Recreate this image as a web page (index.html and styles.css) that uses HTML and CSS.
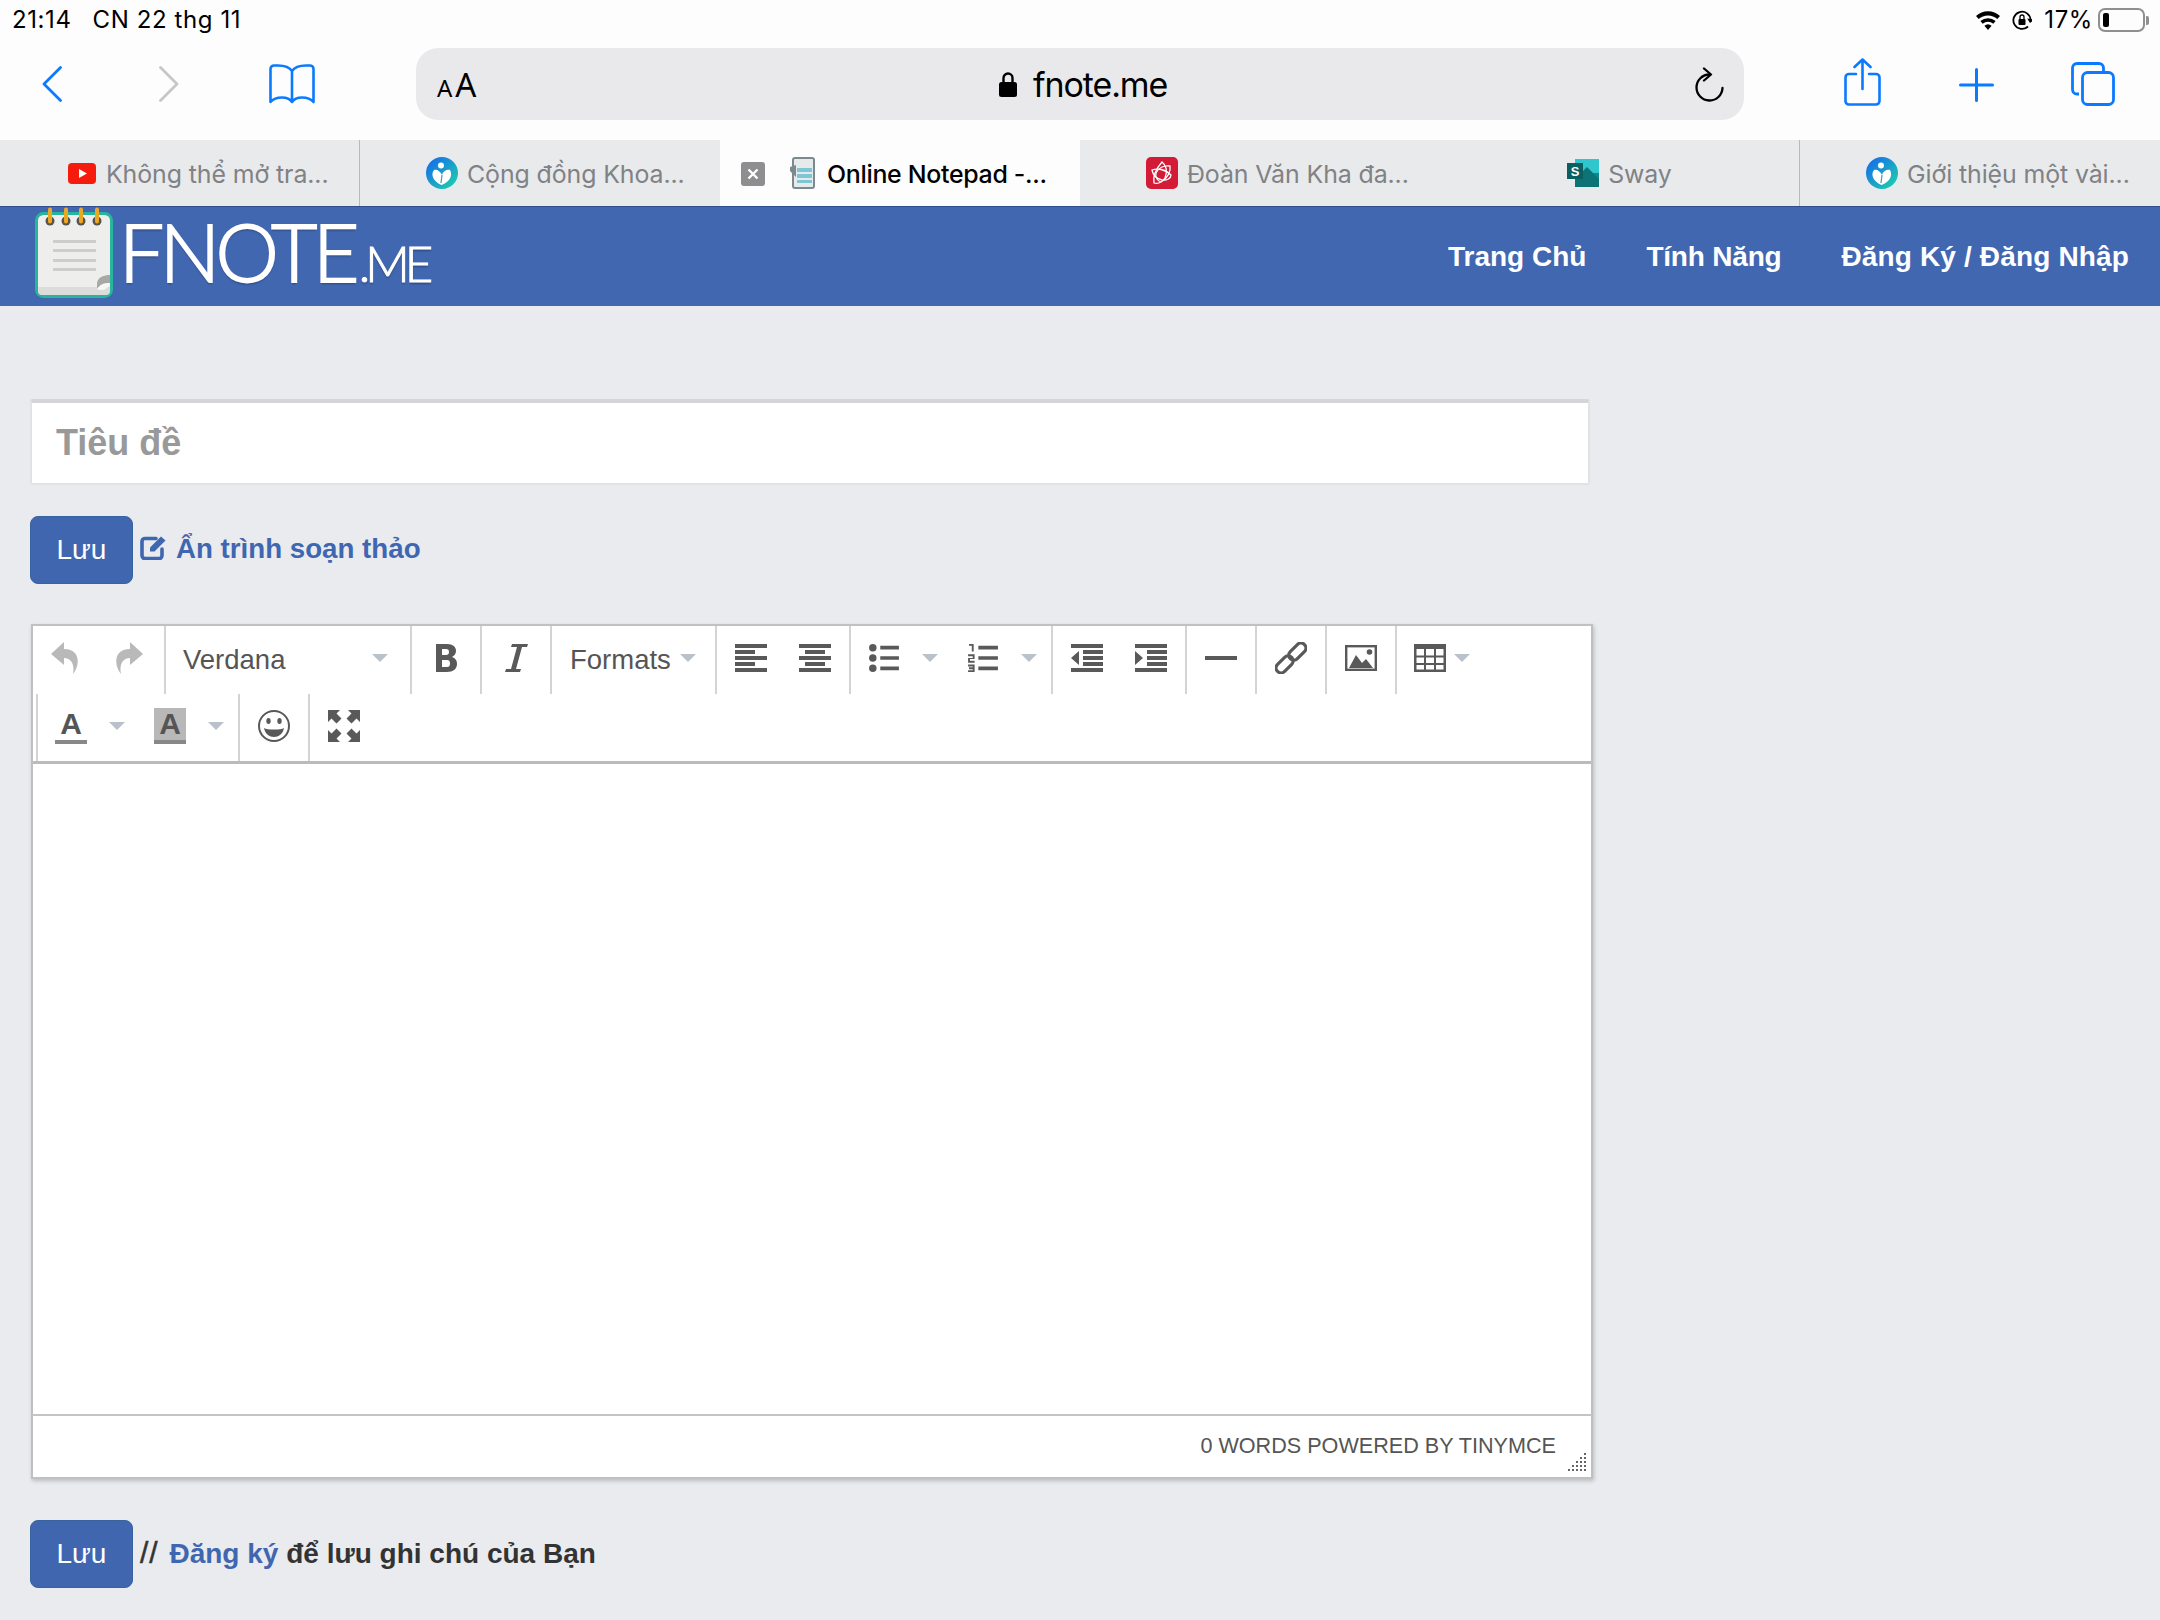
FILE: index.html
```html
<!DOCTYPE html>
<html lang="vi">
<head>
<meta charset="utf-8">
<title>Online Notepad</title>
<link rel="stylesheet" href="styles.css">
</head>
<body>
<header class="browser">
  <div class="status">
    <div class="status-left"><span>21:14</span><span>CN 22 thg 11</span></div>
    <div class="status-right">
      <svg class="i-wifi" viewBox="0 0 26 20"><path d="M13 20l-3.600-4.200a5.400 5.400 0 0 1 7.200 0zM7.700 13.800L5.400 11a11.600 11.600 0 0 1 15.200 0l-2.300 2.800a8 8 0 0 0-10.600 0zM3.700 9L1 6a17.600 17.600 0 0 1 24 0l-2.700 3a14 14 0 0 0-18.600 0z" fill="#000"/></svg>
      <svg class="i-rot" viewBox="0 0 20 20"><path d="M16 16.500A8.600 8.600 0 1 1 18.600 10" fill="none" stroke="#000" stroke-width="1.800"/><path d="M15 9h7l-3.500 4z" fill="#000" transform="rotate(10 18 10)"/><rect x="6.500" y="9" width="7" height="6" rx="1" fill="#000"/><path d="M8 9V7a2 2 0 0 1 4 0v2" fill="none" stroke="#000" stroke-width="1.300"/></svg>
      <span>17%</span>
      <div class="battery"><div class="battery-level"></div></div>
      <div class="battery-nub"></div>
    </div>
  </div>
  <div class="toolbar">
    <div class="tools-left">
      <svg class="i-chev" viewBox="0 0 20 36"><path d="M18.500 1.500L2 18l16.500 16.500" fill="none" stroke="#0a7aff" stroke-width="2.800" stroke-linecap="round" stroke-linejoin="round"/></svg>
      <svg class="i-chev i-fwd" viewBox="0 0 20 36"><path d="M1.500 1.500L18 18 1.500 34.500" fill="none" stroke="#c6c7c9" stroke-width="2.800" stroke-linecap="round" stroke-linejoin="round"/></svg>
      <svg class="i-book" viewBox="0 0 46 40"><path d="M23 7C20 2.500 15 1.500 9 1.500H5A3.500 3.500 0 0 0 1.500 5v33C5 34 9 33.500 13 33.500c4 0 8 1.500 10 4.500 2-3 6-4.500 10-4.500 4 0 8 .5 11.500 4.500V5A3.500 3.500 0 0 0 41 1.500h-4C31 1.500 26 2.500 23 7zm0 0v31" fill="none" stroke="#0a7aff" stroke-width="2.600" stroke-linejoin="round"/></svg>
    </div>
    <div class="urlbar">
      <div class="aa"><span class="aa-small">A</span><span class="aa-big">A</span></div>
      <div class="url">
        <svg class="i-lock" viewBox="0 0 18 25"><path d="M4.500 11V6a4.500 4.500 0 0 1 9 0v5" fill="none" stroke="#000" stroke-width="2.400"/><rect y="10" width="18" height="15" rx="2.500" fill="#000"/></svg>
        <span>fnote.me</span>
      </div>
      <svg class="i-reload" viewBox="0 0 29 35"><path d="M14.500 7.500A13 13 0 1 0 27.500 21" fill="none" stroke="#000" stroke-width="2.300" stroke-linecap="round"/><path d="M9 1.500l7 6-7 6" fill="none" stroke="#000" stroke-width="2.300" stroke-linecap="round" stroke-linejoin="round"/></svg>
    </div>
    <div class="tools-right">
      <svg class="i-share" viewBox="0 0 37 48"><path d="M12 16H5a3.500 3.500 0 0 0-3.500 3.500v23A3.500 3.500 0 0 0 5 46.500h27a3.500 3.500 0 0 0 3.500-3.500V19.500A3.500 3.500 0 0 0 32 16h-7M18.500 31V2M10.500 9l8-7.500 8 7.500" fill="none" stroke="#0a7aff" stroke-width="2.600" stroke-linecap="round" stroke-linejoin="round"/></svg>
      <svg class="i-plus" viewBox="0 0 35 34"><path d="M17.500 1.500v31M1.500 17h32" fill="none" stroke="#0a7aff" stroke-width="3" stroke-linecap="round"/></svg>
      <svg class="i-tabs" viewBox="0 0 44 44"><path d="M8 32H6a4.500 4.500 0 0 1-4.500-4.500V6A4.500 4.500 0 0 1 6 1.500h22A4.500 4.500 0 0 1 32.500 6v4" fill="none" stroke="#0a7aff" stroke-width="2.800"/><rect x="11.500" y="10.500" width="31" height="32" rx="5" fill="none" stroke="#0a7aff" stroke-width="2.800"/></svg>
    </div>
  </div>
  <div class="tabs">
    <div class="tab tab-long tab-yt">
      <svg class="fav fav-yt" viewBox="0 0 28 21"><rect width="28" height="21" rx="4" fill="#f61c0d"/><path d="M11 6l8 4.500-8 4.500z" fill="#fff"/></svg>
      <span>Không thể mở tra...</span>
    </div>
    <div class="tab tab-long">
      <svg class="fav" viewBox="0 0 32 32"><defs><linearGradient id="gr1" x1="0" y1="0" x2="1" y2="1"><stop offset="0" stop-color="#1463f0"/><stop offset="1" stop-color="#1fd7a8"/></linearGradient></defs><circle cx="16" cy="16" r="16" fill="url(#gr1)"/><circle cx="15" cy="8.500" r="3" fill="#fff"/><path d="M15.500 28C8 25 4 18 8 13c3-1 6 1 8 5 1-4 5-6 8-5 3 5 0 12-8.500 15z" fill="#fff"/><path d="M16 18l-1 8" stroke="#3aa0d8" stroke-width="1.200"/></svg>
      <span>Cộng đồng Khoa...</span>
    </div>
    <div class="tab tab-long tab-active">
      <svg class="tab-close" viewBox="0 0 24 24"><rect width="24" height="24" rx="3" fill="#8e8e90"/><path d="M7.500 7.500l9 9m0-9l-9 9" stroke="#fff" stroke-width="2.400"/></svg>
      <svg class="fav fav-note" viewBox="0 0 26 32"><rect x="4" y="1" width="21" height="30" rx="2" fill="#e7eaeb" stroke="#7c8a90" stroke-width="2"/><rect x="8" y="11" width="15" height="4" fill="#7fc6d4"/><rect x="8" y="17" width="15" height="4" fill="#7fc6d4"/><rect x="8" y="23" width="15" height="3" fill="#7fc6d4"/><path d="M1 10l6-2v12l-6-6z" fill="#7c8a90"/></svg>
      <span>Online Notepad -...</span>
    </div>
    <div class="tab tab-long">
      <svg class="fav" viewBox="0 0 32 32"><rect width="32" height="32" rx="5" fill="#d31a36"/><g fill="none" stroke="#fff" stroke-width="1.300"><path d="M16 5c4 3 6 9 3 16-3 5-8 6-11 5-1-5 1-13 8-21z"/><path d="M6 13c5-2 13-1 19 5 0 3-4 6-9 5-5-1-9-5-10-10z"/><path d="M24 9c1 5-2 12-9 16-3-1-6-4-5-9 2-5 8-8 14-7z"/></g></svg>
      <span>Đoàn Văn Kha đa...</span>
    </div>
    <div class="tab">
      <svg class="fav fav-sway" viewBox="0 0 32 28"><path d="M8 0h24v28H8z" fill="#0f8a8c"/><path d="M8 0h24v14H8z" fill="#2fc6cd"/><path d="M8 20l12-12 12 12v8H8z" fill="#0d7377"/><rect y="4" width="16" height="16" fill="#0a5f63"/><text x="8" y="17" class="sway-s">S</text></svg>
      <span>Sway</span>
    </div>
    <div class="tab tab-long">
      <svg class="fav" viewBox="0 0 32 32"><circle cx="16" cy="16" r="16" fill="url(#gr1)"/><circle cx="15" cy="8.500" r="3" fill="#fff"/><path d="M15.500 28C8 25 4 18 8 13c3-1 6 1 8 5 1-4 5-6 8-5 3 5 0 12-8.500 15z" fill="#fff"/><path d="M16 18l-1 8" stroke="#3aa0d8" stroke-width="1.200"/></svg>
      <span>Giới thiệu một vài...</span>
    </div>
  </div>
</header>

<nav class="nav">
  <a class="brand" href="#">
    <svg class="brand-icon" viewBox="0 0 78 91">
      <rect x="1.500" y="6.500" width="75" height="83" rx="7" fill="#eeeeec" stroke="#27b59b" stroke-width="3"/>
      <path d="M3 80h72v4a4 4 0 0 1-4 4H7a4 4 0 0 1-4-4z" fill="#dcdcda"/>
      <g fill="#cdcdcb"><rect x="18" y="33" width="43" height="3"/><rect x="18" y="42" width="43" height="3"/><rect x="18" y="52" width="43" height="3"/><rect x="18" y="61" width="43" height="3"/></g>
      <path d="M75 68c-6 0-12 2-13 8v6c3-4 6-6 13-6z" fill="#a8a8a4"/>
      <path d="M75 76c-7 0-10 2-13 6 4 2 10 2 13-6z" fill="#f7f7f5"/>
      <g fill="#56544a"><circle cx="15" cy="14" r="4.500"/><circle cx="31" cy="14" r="4.500"/><circle cx="46" cy="14" r="4.500"/><circle cx="62" cy="14" r="4.500"/></g>
      <g stroke="#eaa823" stroke-width="4" stroke-linecap="round"><path d="M15 2.500v12M31 2.500v12M46 2.500v12M62 2.500v12"/></g>
    </svg>
    <span class="brand-name">FNOTE</span><span class="brand-tld">.ME</span>
  </a>
  <div class="nav-links">
    <a href="#">Trang Chủ</a>
    <a class="nav-mid" href="#">Tính Năng</a>
    <a class="nav-last" href="#">Đăng Ký / Đăng Nhập</a>
  </div>
</nav>

<main class="main">
  <div class="title-input">Tiêu đề</div>

  <div class="action-row">
    <button class="btn">Lưu</button>
    <a class="link toggle" href="#">
      <svg class="i-edit" viewBox="0 0 28 25"><path d="M22 14v6.500a3 3 0 0 1-3 3H5a3 3 0 0 1-3-3V6.500a3 3 0 0 1 3-3h11" fill="none" stroke="#3f66b0" stroke-width="3.600" stroke-linecap="round"/><path d="M10 12.500L21 1.500l4.500 4L14.500 16.500H10z" fill="#3f66b0"/></svg>
      Ẩn trình soạn thảo
    </a>
  </div>

  <section class="editor">
    <div class="ed-toolbar">
      <div class="ed-row ed-row-first">
        <div class="grp grp-first">
          <div class="tb"><svg class="ic-undo" viewBox="0 0 28 32"><path d="M13 0L0 12l13 11v-7c7 0 11 6 9 16 7-8 8-25-9-25z" fill="#b9b9b9"/></svg></div>
          <div class="tb"><svg class="ic-undo" viewBox="0 0 28 32"><path d="M15 0l13 12-13 11v-7c-7 0-11 6-9 16C-1 24-2 7 15 7z" fill="#b9b9b9"/></svg></div>
        </div>
        <div class="grp grp-font"><span class="tb-text">Verdana</span><i class="caret"></i></div>
        <div class="grp"><div class="tb"><svg class="ic-b" viewBox="6 2 21 28"><path d="M6 2h11c6 0 9 3 9 7 0 3-2 5-4 6 3 1 5 3 5 7 0 5-4 8-10 8H6zm6 5v6h4c2 0 3-1 3-3s-1-3-3-3zm0 11v7h5c2 0 3-1 3-3.500S19 18 17 18z" fill="#595959"/></svg></div></div>
        <div class="grp"><div class="tb"><svg class="ic-i" viewBox="0 0 23 28"><path d="M7 0h16l-1 3h-5L11 25h5l-1 3H0l1-3h5L12 3H6z" fill="#595959"/></svg></div></div>
        <div class="grp grp-formats"><span class="tb-text">Formats</span><i class="caret"></i></div>
        <div class="grp">
          <div class="tb"><svg class="ic" viewBox="0 0 32 28"><path d="M0 0h32v4H0zM0 6h20v4H0zM0 12h32v4H0zM0 18h20v4H0zM0 24h32v4H0z" fill="#595959"/></svg></div>
          <div class="tb"><svg class="ic" viewBox="0 0 32 28"><path d="M0 0h32v4H0zM6 6h20v4H6zM0 12h32v4H0zM6 18h20v4H6zM0 24h32v4H0z" fill="#595959"/></svg></div>
        </div>
        <div class="grp grp-split">
          <div class="split"><svg class="ic" viewBox="0 0 32 30"><ellipse cx="4" cy="4" rx="4" ry="4" fill="#595959"/><ellipse cx="4" cy="15" rx="4" ry="4" fill="#595959"/><ellipse cx="4" cy="26" rx="4" ry="4" fill="#595959"/><path d="M12 2h20v4H12zM12 13h20v4H12zM12 24h20v4H12z" fill="#595959"/></svg><i class="caret"></i></div>
          <div class="split"><svg class="ic" viewBox="0 0 32 30"><path d="M1 0h5v8H4V2H1zM0 11h7v5H2v2h5v2H0v-5h5v-2H0zM0 22h7v8H0v-2h5v-1H1v-2h4v-1H0z" fill="#595959"/><path d="M11 2h21v4H11zM11 13h21v4H11zM11 24h21v4H11z" fill="#595959"/></svg><i class="caret"></i></div>
        </div>
        <div class="grp">
          <div class="tb"><svg class="ic" viewBox="0 0 32 28"><path d="M0 0h32v4H0zM12 6h20v4H12zM12 12h20v4H12zM12 18h20v4H12zM0 24h32v4H0zM8 7v14l-8-7z" fill="#595959"/></svg></div>
          <div class="tb"><svg class="ic" viewBox="0 0 32 28"><path d="M0 0h32v4H0zM12 6h20v4H12zM12 12h20v4H12zM12 18h20v4H12zM0 24h32v4H0zM0 7v14l8-7z" fill="#595959"/></svg></div>
        </div>
        <div class="grp"><div class="tb"><svg class="ic" viewBox="0 0 32 28"><path d="M0 12h32v4H0z" fill="#595959"/></svg></div></div>
        <div class="grp"><div class="tb"><svg class="ic ic-link" viewBox="0 0 32 32"><g fill="none" stroke="#595959" stroke-width="3.200" transform="rotate(-45 16 16)"><rect x="-3" y="11" width="20" height="10" rx="5"/><rect x="15" y="11" width="20" height="10" rx="5"/></g></svg></div></div>
        <div class="grp"><div class="tb"><svg class="ic ic-img" viewBox="0 0 32 26"><rect x="1.200" y="1.200" width="29.600" height="23.600" fill="none" stroke="#595959" stroke-width="2.400"/><path d="M4 23l7-13 6 8 4-4 7 9z" fill="#595959"/><circle cx="24.500" cy="7" r="2.800" fill="#595959"/></svg></div></div>
        <div class="grp grp-table"><svg class="ic" viewBox="0 0 32 28"><path fill-rule="evenodd" d="M0 0h32v28H0zM2.500 5v6.500h7.500V5zm9.500 0v6.500h8V5zm10 0v6.500h7.500V5zM2.500 13.500V19h7.500v-5.500zm9.500 0V19h8v-5.500zm10 0V19h7.500v-5.500zM2.500 21v4.500h7.500V21zm9.500 0v4.500h8V21zm10 0v4.500h7.500V21z" fill="#595959"/></svg><i class="caret"></i></div>
      </div>
      <div class="ed-row ed-row-second">
        <div class="grp grp-split">
          <div class="split"><div class="color-a"><span>A</span></div><i class="caret"></i></div>
          <div class="split"><div class="color-a color-a-bg"><span>A</span></div><i class="caret"></i></div>
        </div>
        <div class="grp"><div class="tb"><svg class="ic ic-sq" viewBox="0 0 32 32"><circle cx="16" cy="16" r="15" fill="none" stroke="#595959" stroke-width="2"/><ellipse cx="10.500" cy="11" rx="2.200" ry="3" fill="#595959"/><ellipse cx="21.500" cy="11" rx="2.200" ry="3" fill="#595959"/><path d="M6 18c3 2 17 2 20 0-1 6-5.500 9-10 9s-9-3-10-9z" fill="#595959"/></svg></div></div>
        <div class="grp"><div class="tb"><svg class="ic ic-sq" viewBox="0 0 32 32"><path d="M0 0H12L8.500 3.500L13.500 8.500L8.500 13.500L3.500 8.500L0 12ZM32 0V12L28.500 8.500L23.500 13.500L18.500 8.500L23.500 3.500L20 0ZM0 32V20L3.500 23.500L8.500 18.500L13.500 23.500L8.500 28.500L12 32ZM32 32H20L23.500 28.500L18.500 23.500L23.500 18.500L28.500 23.500L32 20Z" fill="#595959"/></svg></div></div>
      </div>
    </div>
    <div class="ed-body"></div>
    <div class="ed-footer">
      <span>0 WORDS POWERED BY TINYMCE</span>
      <svg class="grip" viewBox="0 0 18 18"><g fill="#666"><rect x="16" y="0" width="2" height="2"/><rect x="12" y="4" width="2" height="2"/><rect x="16" y="4" width="2" height="2"/><rect x="8" y="8" width="2" height="2"/><rect x="12" y="8" width="2" height="2"/><rect x="16" y="8" width="2" height="2"/><rect x="4" y="12" width="2" height="2"/><rect x="8" y="12" width="2" height="2"/><rect x="12" y="12" width="2" height="2"/><rect x="16" y="12" width="2" height="2"/><rect x="0" y="16" width="2" height="2"/><rect x="4" y="16" width="2" height="2"/><rect x="8" y="16" width="2" height="2"/><rect x="12" y="16" width="2" height="2"/><rect x="16" y="16" width="2" height="2"/></g></svg>
    </div>
  </section>

  <div class="action-row action-row-bottom">
    <button class="btn">Lưu</button>
    <p class="signup"><span class="slashes">//</span> <a class="link" href="#">Đăng ký</a> để lưu ghi chú của Bạn</p>
  </div>
</main>
</body>
</html>
```
FILE: styles.css
```css
* { box-sizing: border-box; }
html, body { margin: 0; padding: 0; }
body {
  width: 2160px;
  height: 1620px;
  overflow: hidden;
  background: #e9ebef;
  font-family: "Liberation Sans", Arial, sans-serif;
  color: #333;
}
a { text-decoration: none; }

/* Browser chrome */
.browser { background: #fdfdfe; font-family: Inter, "Noto Sans", sans-serif; }
.status {
  height: 48px;
  display: flex;
  justify-content: space-between;
  align-items: flex-start;
  padding: 6px 11px 0 12px;
  font-size: 24px;
  letter-spacing: .6px;
  line-height: 28px;
  color: #000;
}
.status-left { display: flex; gap: 21px; }
.status-right { display: flex; align-items: center; height: 28px; }
.i-wifi { width: 26px; height: 20px; margin-right: 11px; }
.i-rot { width: 20px; height: 20px; margin-right: 12px; }
.battery {
  width: 47px;
  height: 24px;
  margin-left: 5px;
  border: 2px solid #8f8f91;
  border-radius: 7px;
  padding: 3px;
}
.battery-level { width: 6px; height: 14px; background: #000; border-radius: 2px; }
.battery-nub { width: 3px; height: 9px; margin-left: 1px; background: #8f8f91; border-radius: 0 2px 2px 0; }

.toolbar { height: 92px; display: grid; grid-template-columns: 416px 1328px 416px; }
.tools-left, .tools-right { display: flex; }
.tools-left { padding: 16px 0 0 42px; align-items: flex-start; }
.i-chev { width: 20px; height: 36px; margin-top: 2px; }
.i-fwd { margin-left: 97px; }
.i-book { width: 46px; height: 40px; margin-left: 90px; }
.urlbar {
  height: 72px;
  background: #e9e9eb;
  border-radius: 22px;
  display: flex;
  align-items: center;
  padding: 0 20px 0 21px;
  position: relative;
}
.aa { width: 520px; display: flex; align-items: baseline; gap: 3px; color: #000; font-family: "Noto Sans", sans-serif; }
.aa-small { font-size: 24px; }
.aa-big { font-size: 33px; }
.url { display: flex; align-items: center; gap: 16px; font-size: 34px; letter-spacing: -1.1px; color: #000; width: 738px; padding-left: 42px; }
.i-lock { width: 18px; height: 25px; }
.i-reload { width: 29px; height: 35px; }
.tools-right { padding: 10px 0 0 100px; align-items: flex-start; }
.i-share { width: 37px; height: 48px; }
.i-plus { width: 35px; height: 34px; margin: 10px 0 0 78px; }
.i-tabs { width: 44px; height: 44px; margin: 4px 0 0 77px; }

.tabs { height: 66px; display: grid; grid-template-columns: repeat(6, 360px); }
.tab {
  background: #e9eaec;
  display: flex;
  align-items: center;
  justify-content: center;
  gap: 9px;
  font-size: 24.900px;
  line-height: 36px;
  letter-spacing: -.1px;
  color: #808285;
  position: relative;
}
.tab span { padding-top: 1px; }
.tab-long { justify-content: flex-start; padding-left: 66px; }
.tab-yt { padding-left: 68px; }
.tab:first-child, .tab:nth-child(5) { border-right: 1px solid #b8b9bb; }
.tab-active { background: #fdfdfe; color: #000; font-weight: 500; letter-spacing: -.3px; padding-left: 69px; gap: 12px; }
.tab-close { position: absolute; left: 21px; top: 22px; width: 24px; height: 24px; }
.fav { width: 32px; height: 32px; flex: none; }
.fav-yt { width: 28px; height: 21px; margin-right: 1px; }
.fav-note { width: 26px; }
.fav-sway { height: 28px; }
.sway-s { font-family: "Liberation Sans", sans-serif; font-size: 13px; font-weight: 700; fill: #fff; text-anchor: middle; }

/* Site nav */
.nav {
  height: 100px;
  background: #4167b1;
  border-top: 1px solid #2f4f8f;
  display: flex;
  justify-content: space-between;
  align-items: center;
  padding: 0 31px 0 35px;
}
.brand { display: flex; align-items: baseline; color: #fff; font-family: Lato, "Open Sans", sans-serif; font-weight: 300; height: 100%; text-shadow: 0 2px 2px rgba(0, 0, 0, .3); }
.brand-icon { width: 78px; height: 91px; align-self: flex-start; flex: none; margin-right: 6px; }
.brand-name { font-size: 80px; line-height: 88px; letter-spacing: -4.500px; -webkit-text-stroke: 1.800px #fff; }
.brand-tld { font-size: 49px; letter-spacing: -5px; -webkit-text-stroke: 1px #fff; margin-left: 4px; }
.nav-links { display: flex; gap: 60px; }
.nav-links a { color: #fff; font-size: 28px; font-weight: 700; }
.nav-links .nav-mid { letter-spacing: -.2px; }
.nav-links .nav-last { letter-spacing: .15px; }

/* Page */
.main { padding: 93px 0 0 30px; }
.title-input {
  width: 1560px;
  height: 86px;
  background: #fff;
  border: 2px solid #e1e2e5;
  border-top: 4px solid #d3d5d8;
  border-radius: 3px;
  padding: 0 24px;
  display: flex;
  align-items: center;
  font-size: 36px;
  font-weight: 700;
  color: #999;
}
.action-row { display: flex; align-items: center; gap: 7px; margin-top: 31px; }
.action-row-bottom { margin-top: 41px; }
.btn {
  width: 103px;
  height: 68px;
  background: #4066b0;
  border: 1px solid #37639f;
  border-radius: 8px;
  color: #fff;
  font: 400 28px "Liberation Sans", sans-serif;
  padding: 0;
}
.link { color: #3f66b0; font-weight: 700; }
.toggle { display: flex; align-items: center; gap: 8px; font-size: 27.700px; margin-bottom: 3px; }
.i-edit { width: 28px; height: 25px; margin-bottom: 2px; }
.signup { margin: 0 0 2px; font-size: 28px; font-weight: 700; color: #333; }
.slashes { font-weight: 400; font-size: 30px; letter-spacing: 1px; margin-right: 3px; -webkit-text-stroke: .5px #333; }

/* Editor */
.editor {
  width: 1562px;
  margin: 40px 0 0 1px;
  height: 855px;
  background: #fff;
  border: 2px solid #bfc0c2;
  box-shadow: 1px 2px 4px rgba(0, 0, 0, .2);
  display: flex;
  flex-direction: column;
}
.ed-toolbar { border-bottom: 3px solid #bbb; flex: none; }
.ed-row { display: flex; height: 67px; }
.ed-row-first { height: 68px; }
.ed-row-second { margin-left: 3px; }
.grp {
  display: flex;
  align-items: center;
  border-left: 2px solid #d4d4d4;
  padding: 0 2px 5px;
  flex: none;
}
.grp-first { border-left: 0; padding: 0 0 5px; width: 131px; }
.tb { width: 64px; display: flex; justify-content: center; }
.ic { width: 32px; height: 28px; display: block; }
.ic-b { width: 21px; height: 28px; display: block; }
.ic-i { width: 23px; height: 28px; display: block; }
.ic-link { height: 32px; }
.ic-sq { height: 32px; }
.ic-img { height: 26px; }
.ic-undo { width: 28px; height: 32px; display: block; }
.tb-text { font-size: 27.500px; color: #555; margin-top: 5px; }
.caret {
  display: block;
  flex: none;
  width: 0;
  height: 0;
  border-left: 8px solid transparent;
  border-right: 8px solid transparent;
  border-top: 8px solid #b9c2ca;
}
.grp-font { width: 246px; padding-left: 17px; justify-content: space-between; padding-right: 22px; }
.grp-formats { width: 165px; padding-left: 18px; gap: 9px; }
.grp-split { width: 202px; padding: 0 0 5px 17px; }
.split { width: 99px; flex: none; display: flex; align-items: center; gap: 22px; }
.grp-table { padding-left: 17px; gap: 8px; }
.ed-row-second .grp { padding-bottom: 3px; }
.color-a {
  width: 32px;
  height: 36px;
  border-bottom: 4px solid #888;
  font-size: 30px;
  line-height: 32px;
  text-align: center;
  color: #555;
  font-weight: 700;
  flex: none;
}
.color-a-bg { background: #b8b8b8; }
.ed-body { flex: 1; }
.ed-footer {
  height: 63px;
  flex: none;
  border-top: 2px solid #c4c4c4;
  display: flex;
  align-items: flex-start;
  justify-content: flex-end;
  padding: 17px 5px 0 0;
  font-size: 21.600px;
  line-height: 26px;
  color: #555;
}
.grip { width: 18px; height: 18px; margin: 20px 0 0 12px; }
```
